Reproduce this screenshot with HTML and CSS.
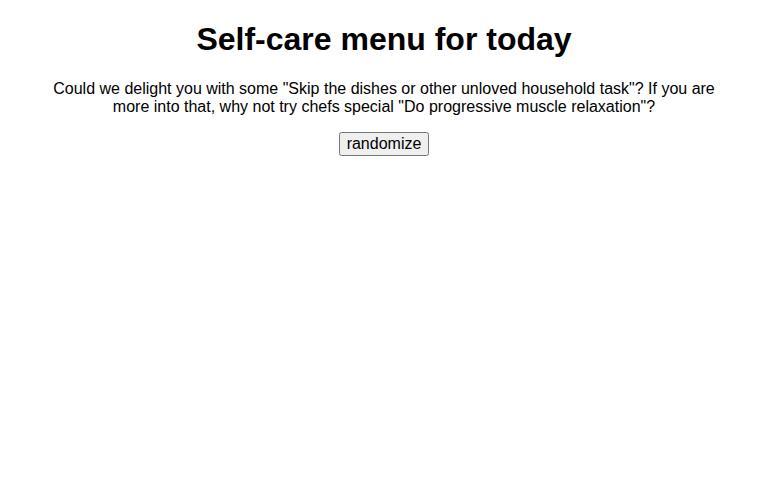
FILE: index.html
```html
<!DOCTYPE html>
<html lang="en">
<head>
    <meta charset="UTF-8">
    <meta name="viewport" content="width=device-width, initial-scale=1.0">
    <title>Self-care menu</title>
    <link rel="stylesheet" href="styles.css">
</head>
<body>
    <div class="menu">
        <h1>Self-care menu for today</h1>
        <p id="suggestion">Could we delight you with some "Skip the dishes or other unloved household task"? If you are more into that, why not try chefs special "Do progressive muscle relaxation"?</p>
        <button id="randomize">randomize</button>
    </div>
</body>
</html>
```

FILE: styles.css
```css
body {
    margin: 0;
    font-family: "Liberation Sans", Arial, sans-serif;
    background-color: #fff;
    color: #000;
}

.menu {
    max-width: 680px;
    margin: 0 auto;
    text-align: center;
}

.menu button {
    font-family: "Liberation Sans", Arial, sans-serif;
    font-size: 16px;
}
```
